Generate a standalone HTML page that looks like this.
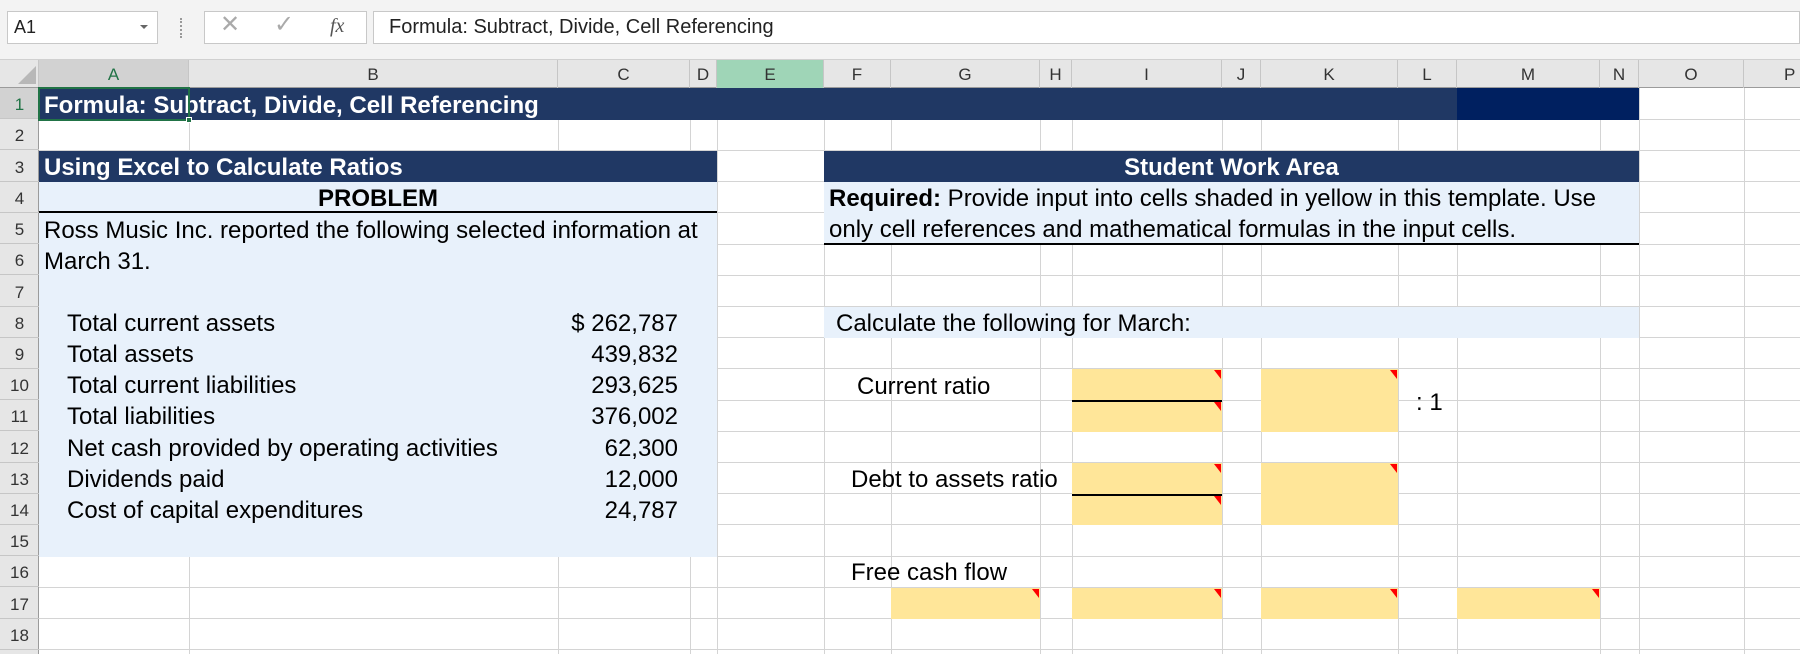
<!DOCTYPE html>
<html><head><meta charset="utf-8"><style>
*{margin:0;padding:0;box-sizing:border-box}
body{width:1800px;height:654px;overflow:hidden;background:#fff;font-family:"Liberation Sans",Arial,sans-serif;position:relative}
.a{position:absolute}
.t{position:absolute;font-size:24px;line-height:33px;white-space:nowrap;color:#000}
.vl{position:absolute;top:88px;height:566px;width:1px;background:#d4d4d4}
.hl{position:absolute;left:39px;width:1761px;height:1px;background:#d4d4d4}
.ch{position:absolute;top:60px;height:28px;line-height:30px;text-align:center;font-size:17px;color:#333;border-right:1px solid #c6c6c6}
.rh{position:absolute;left:0;width:39px;height:31px;line-height:34px;text-align:center;font-size:17px;color:#333;border-bottom:1px solid #c6c6c6}
.y{position:absolute;background:#ffe699}
.tri{position:absolute;width:0;height:0;border-top:9px solid #f00;border-left:7px solid transparent}
</style></head><body>
<div class="a" style="left:0;top:0;width:1800px;height:60px;background:#f3f3f3;border-bottom:1px solid #d0d0d0"></div>
<div class="a" style="left:7px;top:11px;width:151px;height:33px;background:#fff;border:1px solid #c8c8c8;font-size:18px;line-height:31px;padding-left:6px;color:#222">A1</div>
<div class="a" style="left:140px;top:25px;width:0;height:0;border-left:4px solid transparent;border-right:4px solid transparent;border-top:4px solid #666"></div>
<div class="a" style="left:180px;top:18px;width:2px;height:20px;border-left:2px dotted #999"></div>
<div class="a" style="left:204px;top:11px;width:163px;height:33px;background:#fff;border:1px solid #c8c8c8"></div>
<div class="t" style="left:220px;top:7px;font-size:24px;color:#aaa;line-height:36px">✕</div>
<div class="t" style="left:274px;top:7px;font-size:24px;color:#aaa;line-height:36px">✓</div>
<div class="t" style="left:330px;top:8px;font-size:20px;color:#555;font-style:italic;font-family:'Liberation Serif',serif;line-height:36px">fx</div>
<div class="a" style="left:373px;top:11px;width:1427px;height:33px;background:#fff;border:1px solid #c8c8c8;font-size:20px;line-height:31px;padding-left:15px;color:#222">Formula: Subtract, Divide, Cell Referencing</div>
<div class="a" style="left:0;top:60px;width:1800px;height:28px;background:#e6e6e6;border-bottom:1px solid #9b9b9b"></div>
<div class="a" style="left:0;top:60px;width:39px;height:28px;border-right:1px solid #c6c6c6"></div>
<div class="a" style="left:18px;top:66px;width:0;height:0;border-left:18px solid transparent;border-bottom:18px solid #b8b8b8"></div>
<div class="ch" style="left:39px;width:150px;background:#d2d2d2;color:#217346">A</div>
<div class="ch" style="left:189px;width:369px">B</div>
<div class="ch" style="left:558px;width:132px">C</div>
<div class="ch" style="left:690px;width:27px">D</div>
<div class="ch" style="left:717px;width:107px;background:#9fd5b7">E</div>
<div class="ch" style="left:824px;width:67px">F</div>
<div class="ch" style="left:891px;width:149px">G</div>
<div class="ch" style="left:1040px;width:32px">H</div>
<div class="ch" style="left:1072px;width:150px">I</div>
<div class="ch" style="left:1222px;width:39px">J</div>
<div class="ch" style="left:1261px;width:137px">K</div>
<div class="ch" style="left:1398px;width:59px">L</div>
<div class="ch" style="left:1457px;width:143px">M</div>
<div class="ch" style="left:1600px;width:39px">N</div>
<div class="ch" style="left:1639px;width:105px">O</div>
<div class="ch" style="left:1744px;width:112px;text-align:left;padding-left:40px">P</div>
<div class="a" style="left:0;top:88px;width:39px;height:566px;background:#e6e6e6;border-right:1px solid #9b9b9b"></div>
<div class="rh" style="top:88px;background:#d2d2d2;color:#217346">1</div>
<div class="rh" style="top:119px">2</div>
<div class="rh" style="top:151px">3</div>
<div class="rh" style="top:182px">4</div>
<div class="rh" style="top:213px">5</div>
<div class="rh" style="top:244px">6</div>
<div class="rh" style="top:276px">7</div>
<div class="rh" style="top:307px">8</div>
<div class="rh" style="top:338px">9</div>
<div class="rh" style="top:369px">10</div>
<div class="rh" style="top:400px">11</div>
<div class="rh" style="top:432px">12</div>
<div class="rh" style="top:463px">13</div>
<div class="rh" style="top:494px">14</div>
<div class="rh" style="top:525px">15</div>
<div class="rh" style="top:556px">16</div>
<div class="rh" style="top:588px">17</div>
<div class="rh" style="top:619px">18</div>
<div class="vl" style="left:189px"></div><div class="vl" style="left:558px"></div><div class="vl" style="left:690px"></div><div class="vl" style="left:717px"></div><div class="vl" style="left:824px"></div><div class="vl" style="left:891px"></div><div class="vl" style="left:1040px"></div><div class="vl" style="left:1072px"></div><div class="vl" style="left:1222px"></div><div class="vl" style="left:1261px"></div><div class="vl" style="left:1398px"></div><div class="vl" style="left:1457px"></div><div class="vl" style="left:1600px"></div><div class="vl" style="left:1639px"></div><div class="vl" style="left:1744px"></div>
<div class="hl" style="top:119px"></div><div class="hl" style="top:150px"></div><div class="hl" style="top:181px"></div><div class="hl" style="top:212px"></div><div class="hl" style="top:244px"></div><div class="hl" style="top:275px"></div><div class="hl" style="top:306px"></div><div class="hl" style="top:337px"></div><div class="hl" style="top:368px"></div><div class="hl" style="top:400px"></div><div class="hl" style="top:431px"></div><div class="hl" style="top:462px"></div><div class="hl" style="top:493px"></div><div class="hl" style="top:524px"></div><div class="hl" style="top:556px"></div><div class="hl" style="top:587px"></div><div class="hl" style="top:618px"></div><div class="hl" style="top:649px"></div>
<div class="a" style="left:39px;top:88px;width:1418px;height:32px;background:#203864"></div>
<div class="a" style="left:1457px;top:88px;width:182px;height:32px;background:#002060"></div>
<div class="a" style="left:39px;top:151px;width:678px;height:31px;background:#203864"></div>
<div class="a" style="left:39px;top:182px;width:678px;height:375px;background:#e8f1fb"></div>
<div class="a" style="left:39px;top:211px;width:678px;height:2px;background:#000"></div>
<div class="a" style="left:824px;top:151px;width:815px;height:31px;background:#203864"></div>
<div class="a" style="left:824px;top:182px;width:815px;height:63px;background:#e8f1fb;border-bottom:2px solid #000"></div>
<div class="a" style="left:824px;top:307px;width:815px;height:31px;background:#e8f1fb"></div>
<div class="y" style="left:1072px;top:369px;width:150px;height:63px"></div>
<div class="y" style="left:1261px;top:369px;width:137px;height:63px"></div>
<div class="y" style="left:1072px;top:463px;width:150px;height:62px"></div>
<div class="y" style="left:1261px;top:463px;width:137px;height:62px"></div>
<div class="y" style="left:891px;top:588px;width:149px;height:31px"></div>
<div class="y" style="left:1072px;top:588px;width:150px;height:31px"></div>
<div class="y" style="left:1261px;top:588px;width:137px;height:31px"></div>
<div class="y" style="left:1457px;top:588px;width:143px;height:31px"></div>
<div class="a" style="left:1072px;top:400px;width:150px;height:2px;background:#000"></div>
<div class="a" style="left:1072px;top:494px;width:150px;height:2px;background:#000"></div>
<div class="tri" style="left:1214px;top:370px"></div><div class="tri" style="left:1214px;top:402px"></div>
<div class="tri" style="left:1390px;top:370px"></div>
<div class="tri" style="left:1214px;top:464px"></div><div class="tri" style="left:1214px;top:496px"></div>
<div class="tri" style="left:1390px;top:464px"></div>
<div class="tri" style="left:1032px;top:589px"></div><div class="tri" style="left:1214px;top:589px"></div>
<div class="tri" style="left:1390px;top:589px"></div><div class="tri" style="left:1592px;top:589px"></div>
<div class="t" style="left:44px;top:89px;color:#fff;font-weight:bold">Formula: Subtract, Divide, Cell Referencing</div>
<div class="a" style="left:38px;top:87px;width:152px;height:34px;border:2px solid #217346"></div>
<div class="a" style="left:186px;top:117px;width:6px;height:6px;background:#217346;border:1px solid #fff"></div>
<div class="t" style="left:44px;top:151px;color:#fff;font-weight:bold">Using Excel to Calculate Ratios</div>
<div class="t" style="left:39px;top:182px;width:678px;text-align:center;font-weight:bold">PROBLEM</div>
<div class="t" style="left:44px;top:214px">Ross Music Inc. reported the following selected information at</div>
<div class="t" style="left:44px;top:245px">March 31.</div>
<div class="t" style="left:67px;top:307px">Total current assets</div>
<div class="t" style="left:67px;top:338px">Total assets</div>
<div class="t" style="left:67px;top:369px">Total current liabilities</div>
<div class="t" style="left:67px;top:400px">Total liabilities</div>
<div class="t" style="left:67px;top:432px">Net cash provided by operating activities</div>
<div class="t" style="left:67px;top:463px">Dividends paid</div>
<div class="t" style="left:67px;top:494px">Cost of capital expenditures</div>
<div class="t" style="left:480px;width:198px;text-align:right;top:307px">$ 262,787</div>
<div class="t" style="left:480px;width:198px;text-align:right;top:338px">439,832</div>
<div class="t" style="left:480px;width:198px;text-align:right;top:369px">293,625</div>
<div class="t" style="left:480px;width:198px;text-align:right;top:400px">376,002</div>
<div class="t" style="left:480px;width:198px;text-align:right;top:432px">62,300</div>
<div class="t" style="left:480px;width:198px;text-align:right;top:463px">12,000</div>
<div class="t" style="left:480px;width:198px;text-align:right;top:494px">24,787</div>
<div class="t" style="left:824px;top:151px;width:815px;text-align:center;color:#fff;font-weight:bold">Student Work Area</div>
<div class="t" style="left:829px;top:182px"><b>Required:</b> Provide input into cells shaded in yellow in this template. Use</div>
<div class="t" style="left:829px;top:213px">only cell references and mathematical formulas in the input cells.</div>
<div class="t" style="left:836px;top:307px">Calculate the following for March:</div>
<div class="t" style="left:857px;top:370px">Current ratio</div>
<div class="t" style="left:1416px;top:386px">: 1</div>
<div class="t" style="left:851px;top:463px">Debt to assets ratio</div>
<div class="t" style="left:851px;top:556px">Free cash flow</div>
</body></html>
